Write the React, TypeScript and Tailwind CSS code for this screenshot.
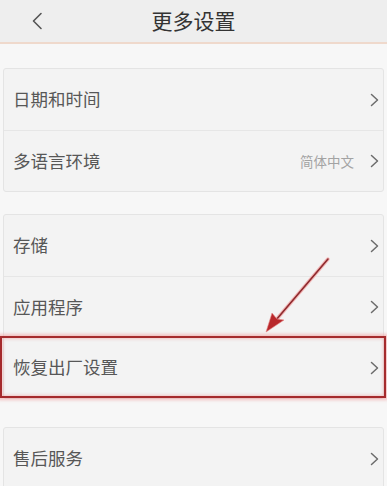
import React from "react";

const Chevron = () => (
  <svg width="9" height="14" viewBox="0 0 9 14" className="shrink-0">
    <polyline points="1.5,1.5 7.5,7 1.5,12.5" fill="none" stroke="#6b6b6b" strokeWidth="1.5" strokeLinecap="round" strokeLinejoin="round" />
  </svg>
);

const Row = ({ label, value, divider }: { label: string; value?: string; divider?: boolean }) => (
  <div className={`flex h-[61px] items-center justify-between pl-[9px] pr-[4px] ${divider ? "border-t border-[#e6e6e6]" : ""}`}>
    <span className="text-[17.5px] text-[#575757]">{label}</span>
    <div className="flex items-center gap-[16px]">
      {value && <span className="text-[13.5px] text-[#a3a3a3]">{value}</span>}
      <Chevron />
    </div>
  </div>
);

export default function App() {
  return (
    <div
      className="relative h-[486px] w-[387px] overflow-hidden bg-[#f7f7f7]"
      style={{ fontFamily: '"Noto Sans CJK SC", "Noto Sans", sans-serif' }}
    >
      <div className="relative flex h-[44px] items-center justify-center border-b-2 border-[#efd9cc] bg-[#eeeeee]">
        <svg width="12" height="18" viewBox="0 0 12 18" className="absolute left-[31px] top-[12px]">
          <polyline points="10,1.5 2.5,9 10,16.5" fill="none" stroke="#555555" strokeWidth="1.6" strokeLinecap="round" strokeLinejoin="round" />
        </svg>
        <span className="text-[21px] text-[#333333]">更多设置</span>
      </div>

      <div className="flex flex-col px-[3px] pt-[24px]">
        <div className="rounded-[3px] border border-[#e4e4e4] bg-[#f3f3f3]">
          <Row label="日期和时间" />
          <Row label="多语言环境" value="简体中文" divider />
        </div>

        <div className="mt-[22px] rounded-[3px] border border-[#e4e4e4] bg-[#f3f3f3]">
          <Row label="存储" />
          <Row label="应用程序" divider />
          <div className="relative">
            <Row label="恢复出厂设置" />
            <div className="pointer-events-none absolute -left-[4px] -right-[3px] -top-[1px] bottom-[0px] border-[2px] border-[#a52a2c] shadow-[0_0_3px_2px_rgba(240,150,150,0.55),inset_0_0_3px_1px_rgba(240,150,150,0.5)]" />
          </div>
        </div>

        <div className="mt-[28px] rounded-[3px] border border-[#e4e4e4] bg-[#f3f3f3]">
          <Row label="售后服务" />
        </div>
      </div>

      <svg width="387" height="486" viewBox="0 0 387 486" className="pointer-events-none absolute left-0 top-0">
        <line x1="328" y1="259" x2="276" y2="320" stroke="#f2b5b5" strokeWidth="3.5" strokeLinecap="round" />
        <line x1="328" y1="259" x2="276" y2="320" stroke="#8e2a2e" strokeWidth="1.6" strokeLinecap="round" />
        <polygon points="266,332 272,313 277,319 284,320" fill="#b8282c" stroke="#e88a8a" strokeWidth="0.6" />
      </svg>
    </div>
  );
}
